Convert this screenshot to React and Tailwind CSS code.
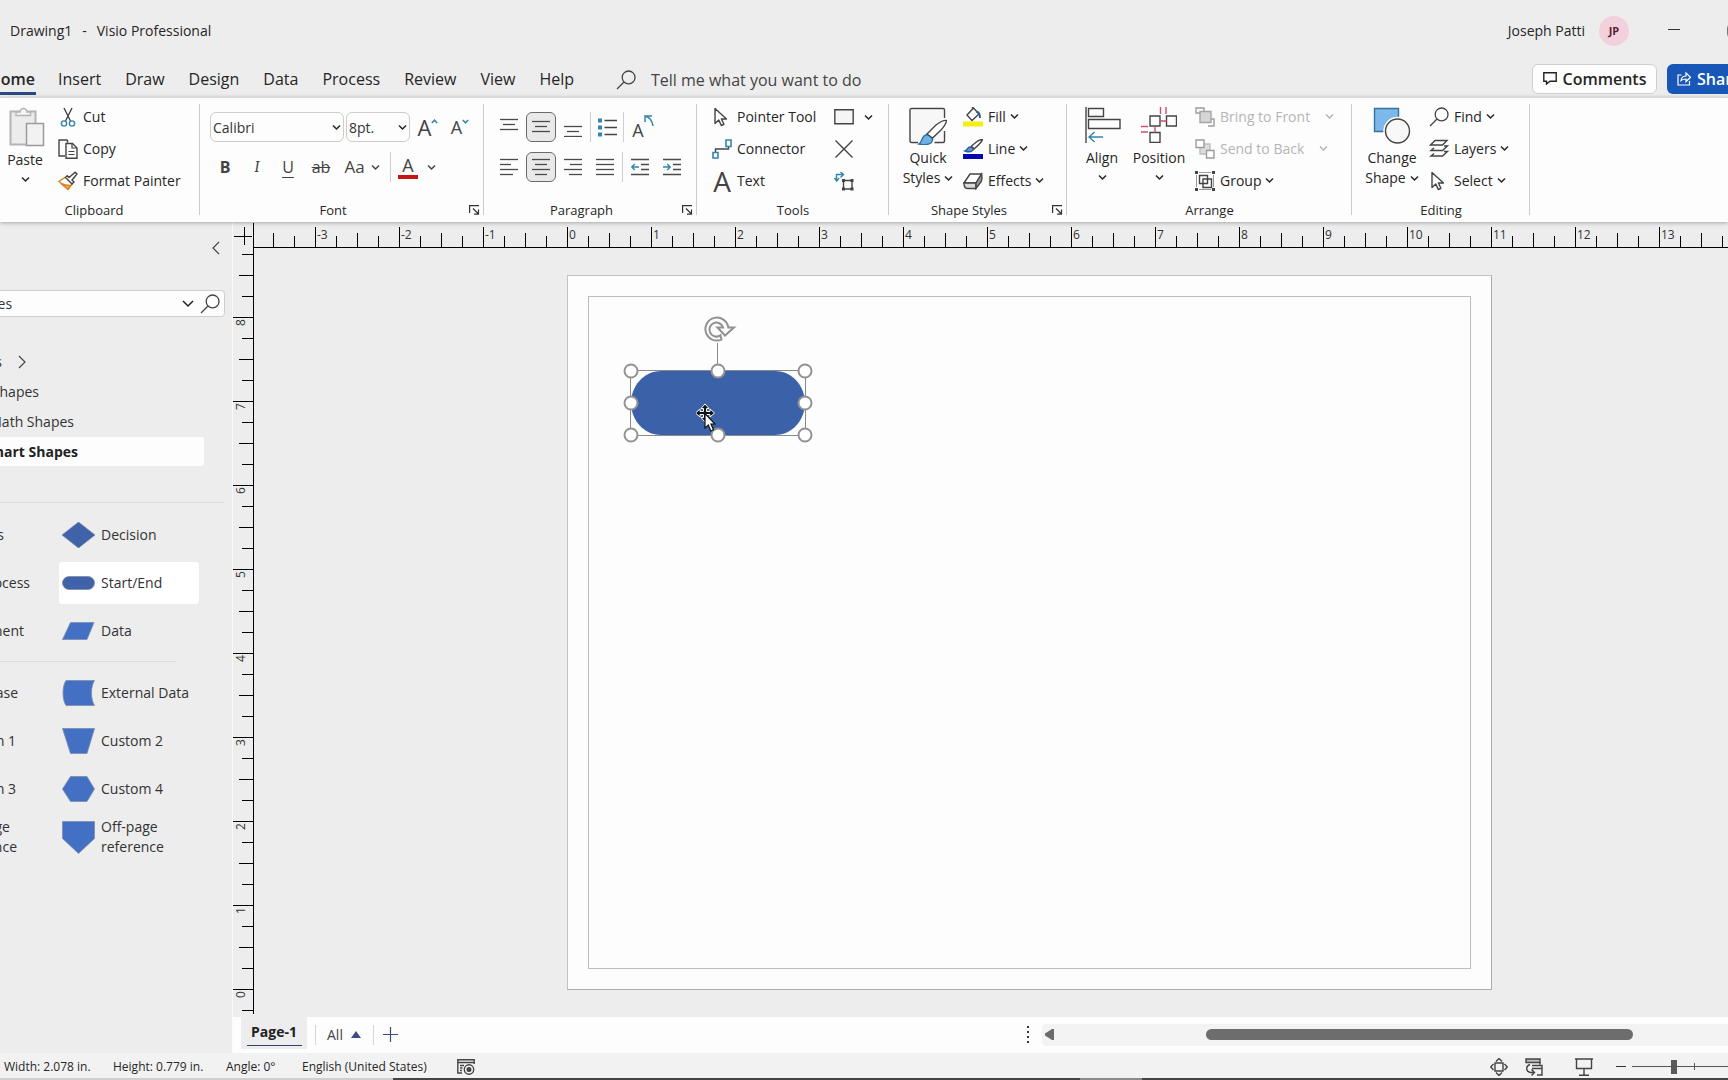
const INK = '#444444';
const BLUE = '#3584ab';

function Svg({ w = 20, h = 20, className = '', children }) {
  return (
    <svg
      width={w}
      height={h}
      viewBox={`0 0 ${w} ${h}`}
      fill="none"
      stroke={INK}
      strokeWidth="1.4"
      aria-hidden="true"
      className={`shrink-0 ${className}`}
    >
      {children}
    </svg>
  );
}

function Chevron({ className = '' }) {
  return (
    <svg width="9" height="7" viewBox="0 0 9 7" fill="none" stroke="currentColor" strokeWidth="1.5" aria-hidden="true" className={`shrink-0 ${className}`}>
      <path d="M1 1.5l3.500 3.500L8 1.500" />
    </svg>
  );
}

const SearchIcon = ({ size = 20 }) => (
  <svg width={size} height={size} viewBox="0 0 20 20" fill="none" stroke={INK} strokeWidth="1.3" aria-hidden="true" className="shrink-0">
    <circle cx="12.6" cy="7.4" r="6.4" />
    <path d="M8 12l-7 7" />
  </svg>
);

const PasteIcon = () => (
  <Svg w={36} h={40}>
    <path d="M1.500 4.500h25v33h-25z" fill="#ececec" stroke="#b4b4b4" strokeWidth="2" />
    <path d="M7 8.500V5h4a3.500 3.500 0 0 1 7 0h3.500v3.500z" fill="#f6f6f6" stroke="#b4b4b4" strokeWidth="1.500" />
    <path d="M17.500 16.500h17v22h-17z" fill="#f2f2f2" stroke="#9b9b9b" strokeWidth="1.500" />
  </Svg>
);

const CutIcon = () => (
  <Svg>
    <path d="M6 1l6.500 13M14 1L7.500 14" />
    <circle cx="6" cy="16.500" r="2.600" stroke={BLUE} />
    <circle cx="14" cy="16.500" r="2.600" stroke={BLUE} />
  </Svg>
);

const CopyIcon = () => (
  <Svg>
    <path d="M7 17H1V1h8.500" />
    <path d="M9.500 1v2.500M8 4.500h6.500l4.500 4.500v10.300H8z" />
    <path d="M14 4.500V9h5M10.500 12.500h6M10.500 15.500h6" strokeWidth="1.200" />
  </Svg>
);

const PainterIcon = () => (
  <Svg>
    <path d="M7.500 6L1 10.500l9 8 4.500-6" stroke="#d98324" fill="#fff" />
    <path d="M3 12.500c3 1.500 6 2 9.500 2L10 18z" fill="#f2b25f" stroke="#d98324" />
    <path d="M7.500 6.500l6.500 6.500 2-2-2-2 5-6-1.800-1.800L11 6.500l-1.700-1.700z" fill="#fff" />
  </Svg>
);

const LauncherIcon = () => (
  <svg width="11" height="10" viewBox="0 0 11 10" fill="none" stroke="#333" strokeWidth="1.2" aria-hidden="true">
    <path d="M.6 8V.6H10M4 3.500l5 5M9.500 4.500v4.700H5" />
  </svg>
);

function Lines({ rows, stroke = '#4a4a4a' }) {
  return (
    <Svg>
      {rows.map(([x1, x2, y]) => (
        <path key={y} d={`M${x1} ${y}H${x2}`} stroke={stroke} strokeWidth="1.3" />
      ))}
    </Svg>
  );
}

const BulletsIcon = () => (
  <Svg>
    <path d="M7.500 3.500H20M7.500 10.500H20M7.500 17.500H20" />
    <path d="M1 1.500h4v4H1zM1 8.500h4v4H1zM1 15.500h4v4H1z" fill={BLUE} stroke="none" />
  </Svg>
);

const IndentIcon = ({ out }) => (
  <Svg>
    <path d="M1 2.500h18M11 7.500h8M11 12.500h8M1 17.500h18" stroke="#4a4a4a" strokeWidth="1.3" />
    {out ? <path d="M9 10H2M4.800 7L1.800 10l3 3" stroke={BLUE} /> : <path d="M1 10h7M5.200 7l3 3-3 3" stroke={BLUE} />}
  </Svg>
);

const PointerIcon = () => (
  <Svg>
    <path d="M3 1.500v15l3.800-3.400 2.500 5.400 2.600-1.200-2.500-5.300h5.100z" strokeLinejoin="round" />
  </Svg>
);

const ConnectorIcon = () => (
  <Svg>
    <path d="M3.500 13.500V10h13V7.500" />
    <path d="M1 13.500h5v5.500H1zM14 1h5v6.500h-5z" stroke={BLUE} strokeWidth="1.600" />
  </Svg>
);

const XIcon = () => (
  <Svg>
    <path d="M1.500 1.500l17 17M18.500 1.500l-17 17" />
  </Svg>
);

const TextBlockIcon = () => (
  <Svg>
    <path d="M2.500 9.500V3.500h6.500M6.500 1L9.500 3.500l-3 3M.500 7l2.200 3L5 7" stroke={BLUE} />
    <path d="M9.500 9.500h8.500v8.500H9.500z" />
    <path d="M8 8h3v3H8zM16.500 8h3v3h-3zM8 16.500h3v3H8zM16.500 16.500h3v3h-3z" fill={INK} stroke="none" />
  </Svg>
);

const QuickStylesIcon = () => (
  <Svg w={38} h={38}>
    <path d="M3 3.500h31v30H3z" fill="#f7f7f7" stroke="none" />
    <path d="M9 35.500H2.500a1.500 1.500 0 0 1-1.500-1.500V3a1.500 1.500 0 0 1 1.500-1.500H34A1.500 1.500 0 0 1 35.500 3v8M35.500 24v10a1.500 1.500 0 0 1-1.500 1.500h-8.500" />
    <path d="M10 37c3-1.500 2-5 5-8s9 0 8.500 4-6 5.500-13.500 4z" fill="#6eb1e4" stroke="#2f6f9d" />
    <path d="M18 27l9-9c4-3 8-5 10.500-4.500C37 17 35 20 31 24l-7.500 7z" fill="#fff" />
  </Svg>
);

const FillIcon = () => (
  <Svg>
    <path d="M0 14.500h20v5H0z" fill="#f5ee12" stroke="none" />
    <path d="M4 8l6.500-7L16 7l-7 6.500z" fill="#fff" />
    <path d="M9.500 1.500V0" />
    <path d="M13 4.500c3 .5 4 2 4 6.500" stroke="#2b5c86" strokeWidth="2" />
  </Svg>
);

const LineIcon = () => (
  <Svg>
    <path d="M0 15h20v5H0z" fill="#0504b4" stroke="none" />
    <path d="M2 12c2-.5 2-3.500 5-4s4 2.500 2 4-4 1-7 0z" fill="#5e93de" stroke="#2c5d9a" />
    <path d="M8.500 7L14 2.500c2-1.500 4-2 5.500-2C19 3 17.500 4.500 11 10z" fill="#fff" />
  </Svg>
);

const EffectsIcon = () => (
  <Svg>
    <path d="M1 12L7 3h11.500L13 12z" fill="#fff" />
    <path d="M1 12h12v5.500H4.500C2.500 17.500 1 15.500 1 12z" fill="#d9d9d9" />
    <path d="M13 12l5.500-9c.8 3.500.5 6-.5 8l-5 6.500z" fill="#9a9a9a" />
  </Svg>
);

const AlignIcon = () => (
  <Svg w={36} h={36}>
    <path d="M1 0v36M3.500 1.500h15v8h-15zM3.500 12.500H35v9H3.500z" />
    <path d="M4 30h14M9.500 25l-5.500 5 5.500 5" stroke={BLUE} />
  </Svg>
);

const PositionIcon = () => (
  <Svg w={36} h={36}>
    <path d="M9 9h10v10H9zM25.500 9h10v10h-10zM9 25.500h10v10H9z" />
    <path d="M19 14h6.500M14 19v6.500M19.500 0v7M25 0v7M0 19.500h7M0 25h7" stroke="#c9516a" />
  </Svg>
);

const FrontIcon = () => (
  <Svg>
    <path d="M6 6H1V1h8v3M13 19h6v-7h-3" stroke="#9c9c9c" />
    <path d="M5 4.500h11v11H5z" fill="#d6d6d6" stroke="#a5a5a5" />
  </Svg>
);

const BackIcon = () => (
  <Svg>
    <path d="M5 5h10v10H5z" fill="#dcdcdc" stroke="#bdbdbd" />
    <path d="M1 1h8v7.500H1zM11.500 11.500H19V19h-7.500z" fill="#fff" stroke="#9c9c9c" />
  </Svg>
);

const GroupIcon = () => (
  <Svg>
    <path d="M4.500 4.500h8v8h-8zM8 8h8.500v8.500H8z" />
    <path d="M4 1.500h12M4 18.500h12M1.500 4v12M18.500 4v12" strokeWidth="1" stroke="#999" />
    <path d="M0 0h3v3H0zM17 0h3v3h-3zM0 17h3v3H0zM17 17h3v3h-3z" fill={INK} stroke="none" />
  </Svg>
);

const ChangeShapeIcon = () => (
  <Svg w={38} h={38}>
    <path d="M1.500 1.500h24v23h-24z" fill="#7cb8ea" stroke="#3572a0" />
    <circle cx="24.500" cy="24" r="13.500" fill="#fdfdfd" stroke="#fdfdfd" />
    <circle cx="24.500" cy="24" r="12" fill="#f8f8f8" />
  </Svg>
);

const LayersIcon = () => (
  <Svg>
    <path d="M6 1.500h12l-4.500 4.500h-12z" />
    <path d="M5 9L2 11.500h11.500L18.500 7H15M5 14.500L2 17h11.500l5-4.500H15" />
  </Svg>
);

const Sep = () => <span className="h-[30px] w-px shrink-0 bg-[#cfcfcf]" />;

function Group({ label, launcher, className = '', children }) {
  return (
    <section aria-label={label} className={`relative flex shrink-0 flex-col pt-[3px] ${className}`}>
      <div className="flex h-[97px] text-sm">{children}</div>
      <div className="flex h-6 items-center pb-px">
        <span className="grow text-center text-[13px] leading-5 text-[#262626]">{label}</span>
        {launcher && (
          <button aria-label={`${label} settings`} className="mr-[2px] flex w-4 justify-center">
            <LauncherIcon />
          </button>
        )}
      </div>
      <span className="absolute top-[6px] right-0 bottom-[7px] w-px bg-[#cbcbcb]" />
    </section>
  );
}

function Row({ icon, children, chevron, muted }) {
  return (
    <button disabled={muted} className={`flex h-8 items-center whitespace-nowrap ${muted ? 'text-[#b5b5b5]' : 'text-[#262626]'}`}>
      <span className="flex w-5 justify-center">{icon}</span>
      <span className="ml-[5px]">{children}</span>
      {chevron && <Chevron className={`mb-[2px] ${chevron}`} />}
    </button>
  );
}

function Toggle({ label, on, children, className = 'w-[30px]' }) {
  return (
    <button
      aria-label={label}
      aria-pressed={!!on}
      className={`flex h-[30px] shrink-0 items-center justify-center rounded-md ${on ? 'border border-[#6b6b6b] bg-[#e9e9e9]' : ''} ${className}`}
    >
      {children}
    </button>
  );
}

function Combo({ label, value, className }) {
  return (
    <label className={`relative flex h-[30px] items-center ${className}`}>
      <span className="sr-only">{label}</span>
      <select className="h-full w-full appearance-none rounded-md border border-[#cdcdcd] bg-[#fdfdfd] pt-[2px] pl-[2px] text-sm text-[#333]" defaultValue={value}>
        <option>{value}</option>
      </select>
      <Chevron className="pointer-events-none absolute right-[3px]" />
    </label>
  );
}

const LetterIcon = ({ size = 'text-2xl' }) => <span className={`${size} leading-none text-[#444]`}>A</span>;

function Ribbon() {
  return (
    <div className="relative z-10 flex h-[125px] shrink-0 border-t border-[#d9d9d9] bg-[#fdfdfd] shadow-[0_1px_4px_rgba(0,0,0,0.3)]">
      <Group label="Clipboard" className="w-[200px] [&>div:last-of-type]:pr-3">
        <button className="flex w-[50px] flex-col items-center pt-[6px] text-[#262626]">
          <span className="pl-1"><PasteIcon /></span>
          <span className="mt-[3px]">Paste</span>
          <Chevron className="mt-[6px]" />
        </button>
        <div className="pl-2">
          <Row icon={<CutIcon />}>Cut</Row>
          <Row icon={<CopyIcon />}>Copy</Row>
          <Row icon={<PainterIcon />}>Format Painter</Row>
        </div>
      </Group>

      <Group label="Font" launcher className="w-[284px]">
        <div className="flex flex-col gap-[10px] pt-[11px] pl-[10px]">
          <div className="flex items-center">
            <Combo label="Font" value="Calibri" className="w-[134px]" />
            <Combo label="Font size" value="8pt." className="ml-[2px] w-16" />
            <Toggle label="Increase font size" className="ml-[2px] w-8">
              <LetterIcon size="text-[22px]" />
              <svg width="7" height="5" viewBox="0 0 7 5" fill="none" stroke={BLUE} strokeWidth="1.5" className="mb-3"><path d="M.8 4L3.500 1.200 6.200 4" /></svg>
            </Toggle>
            <Toggle label="Decrease font size" className="w-8">
              <LetterIcon size="text-lg" />
              <svg width="7" height="5" viewBox="0 0 7 5" fill="none" stroke={BLUE} strokeWidth="1.5" className="mb-3"><path d="M.8 1L3.500 3.800 6.200 1" /></svg>
            </Toggle>
          </div>
          <div className="flex items-center text-base text-[#444]">
            <Toggle label="Bold"><span className="font-bold">B</span></Toggle>
            <Toggle label="Italic" className="ml-[2px] w-[30px]"><span className="font-serif italic">I</span></Toggle>
            <Toggle label="Underline" className="ml-px w-[30px]"><span className="underline underline-offset-4">U</span></Toggle>
            <Toggle label="Strikethrough" className="ml-[3px] w-[30px]"><span className="line-through">ab</span></Toggle>
            <Toggle label="Change case" className="ml-1 w-11"><span className="text-[17px]">Aa</span><Chevron className="ml-[6px]" /></Toggle>
            <span className="ml-[6px] flex"><Sep /></span>
            <Toggle label="Font color" className="ml-[2px] w-[30px] flex-col">
              <span className="text-lg leading-5">A</span>
              <span className="h-1 w-5 bg-[#c81414]" />
            </Toggle>
            <Toggle label="Font color options" className="w-4"><Chevron /></Toggle>
          </div>
        </div>
      </Group>

      <Group label="Paragraph" launcher className="w-[213px]">
        <div className="flex flex-col gap-[10px] pt-[11px] pl-[10px]">
          <div className="flex gap-[2px]">
            <Toggle label="Align top"><Lines rows={[[1, 19, 2.5], [4, 16, 7.5], [1, 19, 12.5]]} /></Toggle>
            <Toggle label="Align middle" on><Lines rows={[[1, 19, 4.5], [4, 16, 9.5], [1, 19, 14.5]]} /></Toggle>
            <Toggle label="Align bottom"><Lines rows={[[1, 19, 9.5], [4, 16, 14.5], [1, 19, 19.5]]} /></Toggle>
            <Sep />
            <Toggle label="Bullets" className="w-7"><BulletsIcon /></Toggle>
            <Sep />
            <Toggle label="Rotate text" className="w-[34px]">
              <span className="pt-[6px] text-lg leading-none text-[#444]">A</span>
              <svg width="10" height="12" viewBox="0 0 10 12" fill="none" stroke={BLUE} strokeWidth="1.5" className="mb-3"><path d="M1 7V1h7M1 1c4 1 7 4 8 10" /></svg>
            </Toggle>
          </div>
          <div className="flex gap-[2px]">
            <Toggle label="Align left"><Lines rows={[[1, 19, 2.5], [1, 12, 7.5], [1, 19, 12.5], [1, 14, 17.5]]} /></Toggle>
            <Toggle label="Align center" on><Lines rows={[[1, 19, 2.5], [4, 16, 7.5], [1, 19, 12.5], [4, 16, 17.5]]} /></Toggle>
            <Toggle label="Align right"><Lines rows={[[1, 19, 2.5], [7, 19, 7.5], [1, 19, 12.5], [6, 19, 17.5]]} /></Toggle>
            <Toggle label="Justify"><Lines rows={[[1, 19, 2.5], [1, 19, 7.5], [1, 19, 12.5], [1, 19, 17.5]]} /></Toggle>
            <Sep />
            <Toggle label="Decrease indent"><IndentIcon out /></Toggle>
            <Toggle label="Increase indent"><IndentIcon /></Toggle>
          </div>
        </div>
      </Group>

      <Group label="Tools" className="w-[192px]">
        <div className="w-[122px] pl-[15px]">
          <Row icon={<PointerIcon />}>Pointer Tool</Row>
          <Row icon={<ConnectorIcon />}>Connector</Row>
          <Row icon={<LetterIcon size="text-[28px]" />}>Text</Row>
        </div>
        <div className="flex flex-col pl-[15px]">
          <button aria-label="Rectangle" className="flex h-8 items-center gap-[10px]">
            <Svg><path d="M.8 2.800h18.400v14H.8z" fill="#f5f5f5" /></Svg>
            <Chevron />
          </button>
          <button aria-label="Connection point" className="flex h-8 items-center"><XIcon /></button>
          <button aria-label="Text block" className="flex h-8 items-center"><TextBlockIcon /></button>
        </div>
      </Group>

      <Group label="Shape Styles" launcher className="w-[178px]">
        <button className="flex w-[78px] flex-col items-center pt-[6px] text-[#262626]">
          <QuickStylesIcon />
          <span className="mt-[3px] leading-5">Quick</span>
          <span className="flex items-center gap-1 leading-5">Styles <Chevron /></span>
        </button>
        <div className="-ml-1">
          <Row icon={<FillIcon />} chevron="ml-1">Fill</Row>
          <Row icon={<LineIcon />} chevron="ml-1">Line</Row>
          <Row icon={<EffectsIcon />} chevron="ml-1">Effects</Row>
        </div>
      </Group>

      <Group label="Arrange" className="w-[285px]">
        <button className="ml-[11px] flex w-12 flex-col items-center pt-[6px] text-[#262626]">
          <span className="pl-px"><AlignIcon /></span>
          <span className="mt-[5px] leading-5">Align</span>
          <Chevron className="mt-[6px]" />
        </button>
        <button className="flex w-[66px] flex-col items-center pt-[6px] text-[#262626]">
          <PositionIcon />
          <span className="mt-[5px] leading-5">Position</span>
          <Chevron className="mt-[6px]" />
        </button>
        <div className="ml-[3px]">
          <Row icon={<FrontIcon />} muted chevron="ml-[15px]">Bring to Front</Row>
          <Row icon={<BackIcon />} muted chevron="ml-[15px]">Send to Back</Row>
          <Row icon={<GroupIcon />} chevron="ml-1">Group</Row>
        </div>
      </Group>

      <Group label="Editing" className="w-[178px]">
        <button className="ml-[10px] flex w-[60px] flex-col items-center pt-[6px] text-[#262626]">
          <ChangeShapeIcon />
          <span className="mt-[3px] leading-5">Change</span>
          <span className="flex items-center gap-1 leading-5">Shape <Chevron /></span>
        </button>
        <div className="ml-[7px]">
          <Row icon={<SearchIcon />} chevron="ml-1">Find</Row>
          <Row icon={<LayersIcon />} chevron="ml-1">Layers</Row>
          <Row icon={<PointerIcon />} chevron="ml-1">Select</Row>
        </div>
      </Group>
    </div>
  );
}

const STENCIL = {
  Decision: [26, 'M16.500 0L33 13 16.500 26 0 13z', '#3f62a8'],
  'Start/End': [14, 'M7 .500h19a6.500 6.500 0 0 1 0 13H7a6.500 6.500 0 0 1 0-13z', '#3f62a8'],
  Data: [18, 'M8.500 .500H32L25 17.500H.500z', '#4470c4'],
  'External Data': [26, 'M4 .500h28.500c-4 6-4 19 0 25H4C0 20 0 6 4 .500z', '#4470c4'],
  'Custom 2': [26, 'M.500 .500h32L25 25.500H8.500z', '#4470c4'],
  'Custom 4': [26, 'M8.500 .500H25l7.500 12.500L25 25.500H8.500L.500 13z', '#4470c4'],
  'Off-page reference': [33, 'M.500 .500h32v17l-16 15-16-15z', '#4470c4'],
};

function Stencil({ left, name, on }) {
  const [h, d, fill] = STENCIL[name];
  return (
    <div className="flex h-[42px] items-center text-sm leading-5 text-[#333]">
      <button className="flex w-[59px] shrink-0 justify-start text-left">{left}</button>
      <button className={`flex h-full w-[140px] items-center rounded-[3px] pl-[3px] text-left ${on ? 'bg-white' : ''}`}>
        <svg width="33" height={h} viewBox={`0 0 33 ${h}`} className="shrink-0" aria-hidden="true">
          <path d={d} fill={fill} stroke="#7b8cae" strokeWidth="0.800" />
        </svg>
        <span className="ml-[6px] w-24">{name}</span>
      </button>
    </div>
  );
}

/* Right-aligned label whose beginning runs past the window's left edge. */
function Cut({ w, children }) {
  return <span className={`flex shrink-0 justify-end whitespace-nowrap ${w}`}>{children}</span>;
}

function ShapesPanel() {
  return (
    <aside className="flex w-[232px] shrink-0 flex-col overflow-hidden text-sm text-[#333]">
      <div className="flex h-[52px] items-center justify-end pr-3">
        <button aria-label="Collapse the Shapes window">
          <Svg w={8} h={14}><path d="M7 1L1 7l6 6" strokeWidth="1.200" /></Svg>
        </button>
      </div>
      <form className="mt-4 mr-[7px] -ml-[94px] flex h-[27px] items-center rounded border border-[#cfcfcf] bg-[#fdfdfd] pr-1">
        <input aria-label="Search shapes" defaultValue="Search shapes" className="w-full min-w-0 grow bg-transparent pl-[11px] outline-none" />
        <svg width="12" height="8" viewBox="0 0 12 8" fill="none" stroke="#222" strokeWidth="1.5" className="mr-[6px] shrink-0" aria-hidden="true"><path d="M1 1l5 5 5-5" /></svg>
        <SearchIcon />
      </form>
      <nav aria-label="Stencils" className="mt-[30px]">
        <button className="flex h-[30px] items-center">
          <Cut w="w-[2px]">More Shapes</Cut>
          <Svg w={8} h={14} className="ml-4"><path d="M1 1l6 6-6 6" strokeWidth="1.200" /></Svg>
        </button>
        <button className="flex h-[30px] items-center"><Cut w="w-[39px]">Quick Shapes</Cut></button>
        <button className="flex h-[30px] items-center"><Cut w="w-[74px]">Math Shapes</Cut></button>
        <button className="flex h-[29px] w-[204px] items-center rounded-r-[3px] bg-[#fdfdfd] font-bold text-[#222]"><Cut w="w-[78px]">Flowchart Shapes</Cut></button>
      </nav>
      <div className="mt-9 mr-2 border-t border-[#dcdcdc]" />
      <div className="mt-[11px] flex flex-col gap-[6px]">
        <Stencil left={<Cut w="w-1">Process</Cut>} name="Decision" />
        <Stencil left={<Cut w="w-[30px]">Subprocess</Cut>} name="Start/End" on />
        <Stencil left={<Cut w="w-6">Document</Cut>} name="Data" />
      </div>
      <div className="mt-[9px] mr-14 border-t border-[#dcdcdc]" />
      <div className="mt-[10px] flex flex-col gap-[6px]">
        <Stencil left={<Cut w="w-[18px]">Database</Cut>} name="External Data" />
        <Stencil left={<Cut w="w-4">Custom 1</Cut>} name="Custom 2" />
        <Stencil left={<Cut w="w-4">Custom 3</Cut>} name="Custom 4" />
        <Stencil left={<Cut w="w-[17px]"><span>On-page<br />reference</span></Cut>} name="Off-page reference" />
      </div>
    </aside>
  );
}

const H_MARKS = [-4, -3, -2, -1, 0, 1, 2, 3, 4, 5, 6, 7, 8, 9, 10, 11, 12, 13, 14, 15];
const V_MARKS = [9, 8, 7, 6, 5, 4, 3, 2, 1, 0];

function HorizontalRuler() {
  return (
    <div className="flex h-[25px] min-w-0 grow overflow-hidden border-b border-l border-black">
      <div className="-ml-[23px] flex">
        {H_MARKS.map((n) => (
          <div key={n} className="relative flex w-[84px] shrink-0 items-end">
            <span className="h-5 w-[21px] border-l border-black" />
            <span className="h-[11px] w-[21px] border-l border-black" />
            <span className="h-[14px] w-[21px] border-l border-black" />
            <span className="h-[11px] w-[21px] border-l border-black" />
            <span className="absolute top-1 left-[2px] text-xs leading-4 text-[#333]">{n}</span>
          </div>
        ))}
      </div>
    </div>
  );
}

function VerticalRuler() {
  return (
    <div className="mb-[3px] w-[21px] shrink-0 overflow-hidden border-r border-black">
      <div className="-mt-[15px] flex flex-col">
        {V_MARKS.map((n) => (
          <div key={n} className="relative flex h-[84px] shrink-0 flex-col items-end">
            <span className="h-[21px] w-5 border-t border-black" />
            <span className="h-[21px] w-[11px] border-t border-black" />
            <span className="h-[21px] w-[14px] border-t border-black" />
            <span className="h-[21px] w-[11px] border-t border-black" />
            <span className="absolute top-[2px] left-0 rotate-180 text-xs leading-4 text-[#333] [writing-mode:vertical-rl]">{n}</span>
          </div>
        ))}
      </div>
    </div>
  );
}

const HANDLES = ['left-0 top-0', 'left-1/2 top-0', 'left-full top-0', 'left-0 top-1/2', 'left-full top-1/2', 'left-0 top-full', 'left-1/2 top-full', 'left-full top-full'];

function Canvas() {
  return (
    <main className="min-w-0 grow overflow-hidden pt-[27px] pl-[313px]">
      <div className="relative h-[715px] w-[925px] border border-[#c3c3c3] border-r-[#ababab] border-b-[#ababab] bg-[#fdfdfd] p-5">
        <div className="h-full w-full border border-[#bdbdbd]" />
        <div className="absolute top-[94px] left-[62px] h-[66px] w-[176px] border border-[#8a8a8a]">
          <svg width="174" height="64" viewBox="0 0 174 64" aria-hidden="true" className="block">
            <path d="M30 0h114c18 0 30 16 30 32s-12 32-30 32H30C12 64 0 48 0 32S12 0 30 0z" fill="#3b62a9" />
          </svg>
          <span className="absolute -top-7 left-[86px] h-7 w-px bg-[#8a8a8a]" />
          {HANDLES.map((p) => (
            <span key={p} className={`absolute size-[15px] -translate-x-1/2 -translate-y-1/2 rounded-full border-2 border-[#929292] bg-white ${p}`} />
          ))}
          <svg width="34" height="28" viewBox="0 0 34 28" fill="none" stroke="#929292" strokeWidth="2" aria-hidden="true" className="absolute -top-14 left-[72px]">
            <path d="M18.500 24.600A11.500 11.500 0 1 1 25.300 12.500H31L22 20.500 14.500 12.500h5.600A7 7 0 1 0 17.500 20.300z" />
          </svg>
          <svg width="20" height="28" viewBox="0 0 20 28" aria-hidden="true" className="absolute top-[33px] left-[65px]">
            <path d="M9 0l4 4.500h-2.500v3h3.500V5l4.500 4-4.500 4v-2.500h-3.500v3H13L9 18l-4-4.500h2.500v-3H4V13L-.500 9 4 5v2.500h3.500v-3H5z" fill="#111" stroke="#fff" strokeWidth="1" />
            <path d="M9 9.500V24l3.300-3 2.500 6 2.700-1.200L15 20h4z" fill="#fff" stroke="#111" strokeWidth="1.200" />
          </svg>
        </div>
      </div>
    </main>
  );
}

function PageBar() {
  return (
    <div className="flex h-9 shrink-0 items-center bg-[#fdfdfd] pb-px pl-2">
      <button className="flex h-8 w-[66px] flex-col items-center self-start bg-[#ededed] pt-[3px] text-sm font-bold text-[#222]">
        <span className="leading-6">Page-1</span>
        <span className="mt-px h-px w-[55px] bg-[#2e4076]" />
      </button>
      <span className="ml-2 h-5 w-px bg-[#d6d6d6]" />
      <button className="ml-[11px] flex items-center gap-2 text-sm text-[#444]">
        All
        <svg width="10" height="7" viewBox="0 0 10 7" fill="#3d4a86" aria-hidden="true"><path d="M5 0l5 7H0z" /></svg>
      </button>
      <span className="ml-3 h-5 w-px bg-[#d6d6d6]" />
      <button aria-label="Insert page" className="ml-[9px]">
        <svg width="15" height="15" viewBox="0 0 15 15" fill="none" stroke="#3d4a7a" strokeWidth="1.200" aria-hidden="true"><path d="M7.500 0v15M0 7.500h15" /></svg>
      </button>
      <div className="ml-auto flex w-[701px] items-center">
        <span className="flex flex-col gap-[3px]">
          {[0, 1, 2, 3].map((i) => <span key={i} className="size-[2px] bg-[#333]" />)}
        </span>
        <div className="ml-[13px] flex h-[22px] grow items-center rounded-l bg-[#f3f3f3] pl-[3px]">
          <button aria-label="Scroll left">
            <svg width="9" height="11" viewBox="0 0 9 11" fill="#6b6b6b" aria-hidden="true"><path d="M9 0v11L7 11 0 6.500v-2L7 0z" /></svg>
          </button>
          <span className="ml-[152px] h-[11px] w-[427px] rounded-full bg-[#6d6d6d]" />
        </div>
      </div>
    </div>
  );
}

function StatusBar() {
  return (
    <footer className="flex h-[25px] shrink-0 items-center overflow-hidden bg-[#f2f2f2] pt-[2px] pl-1 text-xs whitespace-nowrap text-[#262626]">
      <span className="w-[109px]">Width: 2.078 in.</span>
      <span className="w-[113px]">Height: 0.779 in.</span>
      <span className="w-[76px]">Angle: 0°</span>
      <button className="w-[155px] text-left">English (United States)</button>
      <button aria-label="Record macro">
        <Svg w={18} h={16}>
          <path d="M5 14H.8V.8h16.400V5M.8 3.500h16.400M3 6.500h4M3 9h2.500M3 11.500h2" />
          <circle cx="12" cy="10.500" r="4.700" />
          <circle cx="12" cy="10.500" r="1.800" fill={INK} />
        </Svg>
      </button>
      <div className="ml-auto flex items-center">
        <button aria-label="Fit page to window">
          <Svg w={18} h={18}>
            <path d="M5 5h8v8H5zM6 3.500l3-3 3 3M6 14.500l3 3 3-3M3.500 6L.700 9l2.800 3M14.500 6l2.800 3-2.800 3" />
          </Svg>
        </button>
        <button aria-label="Pan and zoom" className="ml-[17px]">
          <Svg w={18} h={18}>
            <path d="M1 4.500V1h14v3.500z" fill="#bbb" />
            <path d="M15 4.500v2M7 7.500h10v9.500h-5M7 10.500h10M5 6.500C1 8 0 13 5.500 14.500H9M6.500 11.500l3 3-3 3" />
          </Svg>
        </button>
        <button aria-label="Presentation mode" className="ml-8">
          <Svg w={18} h={18}>
            <path d="M0 1h18M1.500 1v9.500h15V1M9 10.500V17M4 17.300h10" />
          </Svg>
        </button>
        <button aria-label="Zoom out" className="ml-[23px] flex h-4 w-[10px] items-center">
          <span className="block h-px w-full bg-[#333]" />
        </button>
        <div className="relative -mr-[104px] ml-[6px] flex w-[200px] items-center">
          <span className="absolute left-[62px] h-[7px] w-px bg-[#555]" />
          <input
            type="range"
            aria-label="Zoom"
            defaultValue="20"
            className="relative h-[14px] w-full appearance-none bg-transparent bg-[linear-gradient(#555,#555)] bg-[length:100%_1px] bg-center bg-no-repeat [&::-webkit-slider-thumb]:h-[14px] [&::-webkit-slider-thumb]:w-[6px] [&::-webkit-slider-thumb]:appearance-none [&::-webkit-slider-thumb]:bg-[#5a5a5a]"
          />
        </div>
      </div>
    </footer>
  );
}

const TABS = ['Insert', 'Draw', 'Design', 'Data', 'Process', 'Review', 'View', 'Help'];

export default function App() {
  return (
    <div className="flex h-screen flex-col overflow-hidden bg-[#ededed] font-['Open_Sans','Noto_Sans',sans-serif] text-[#262626]">
      <header className="flex h-[57px] shrink-0 items-center overflow-hidden pt-[5px] pl-[10px] text-sm">
        <h1 className="flex gap-[10px]"><span>Drawing1</span><span>-</span><span>Visio Professional</span></h1>
        <div className="-mr-[13px] ml-auto flex shrink-0 items-center">
          <span>Joseph Patti</span>
          <span className="ml-[14px] flex size-[30px] items-center justify-center rounded-full bg-[#f2d0dc] text-[11px] font-bold text-[#5a1f38]">JP</span>
          <button aria-label="Minimize" className="ml-[39px] h-3 w-3 pb-[3px]"><span className="block h-px w-full bg-[#333]" /></button>
          <button aria-label="Maximize" className="ml-[47px] size-[14px] rounded-sm border border-[#777]" />
        </div>
      </header>

      <div className="flex h-10 shrink-0 items-center overflow-hidden text-base">
        <nav aria-label="Ribbon tabs" className="flex h-full items-center">
          <button className="flex h-full w-9 flex-col items-end">
            <span className="flex grow items-center pt-2 pr-px font-semibold">Home</span>
            <span className="mb-[2px] h-[3px] w-full bg-[#2b4a82]" />
          </button>
          <div className="ml-[22px] flex gap-6 pt-1">
            {TABS.map((t) => <button key={t}>{t}</button>)}
          </div>
        </nav>
        <label className="ml-[42px] flex items-center gap-[15px] pt-[5px]">
          <SearchIcon />
          <input placeholder="Tell me what you want to do" aria-label="Tell me what you want to do" className="w-60 bg-transparent outline-none placeholder:text-[#444] placeholder:opacity-100" />
        </label>
        <div className="mt-[3px] -mr-[43px] ml-auto flex h-[30px] shrink-0 gap-[10px] font-semibold">
          <button className="flex w-[125px] items-center justify-center gap-[6px] rounded-md border border-[#cfcfcf] bg-[#fdfdfd]">
            <Svg w={14} h={13}><path d="M.8 .8h12.400v8.400H7L3.500 12V9.200H.8z" stroke="#222" /></Svg>
            Comments
          </button>
          <button className="flex w-[104px] items-center gap-[6px] rounded-md bg-[#1857b8] pl-[10px] text-white">
            <Svg w={14} h={15}><path d="M4.500 4H1v10h11.500v-4M4 9.500c.5-3 2.500-4.500 5-4.500V2l4.500 4.300L9 10.500V8C7 8 5.500 8.300 4 9.500z" stroke="#fff" strokeWidth="1.200" /></Svg>
            Share
          </button>
        </div>
      </div>

      <Ribbon />

      <div className="flex min-h-0 grow">
        <ShapesPanel />
        <div className="flex min-w-0 grow flex-col border-l border-[#fafafa]">
          <div className="flex shrink-0 pt-px">
            <span className="flex w-5 shrink-0 items-center justify-center">
              <svg width="18" height="18" viewBox="0 0 18 18" fill="none" stroke="#000" aria-hidden="true"><path d="M10.500 0v18M0 9.500h18" /></svg>
            </span>
            <HorizontalRuler />
          </div>
          <div className="flex min-h-0 grow">
            <VerticalRuler />
            <Canvas />
          </div>
          <PageBar />
        </div>
      </div>

      <StatusBar />
      <div className="flex h-[2px] shrink-0 bg-[#464446]">
        <span className="w-[393px] bg-[#cfcfcf]" />
        <span className="ml-[687px] w-[62px] bg-[#8a8a8a]" />
      </div>
    </div>
  );
}
